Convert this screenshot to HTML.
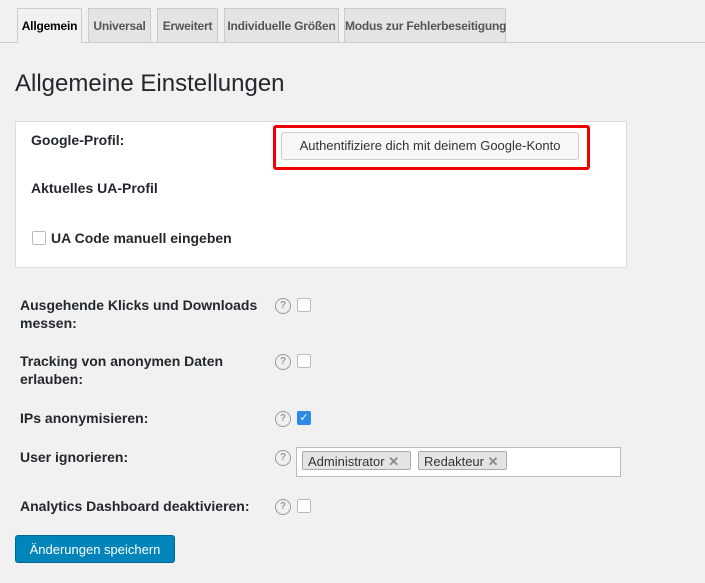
<!DOCTYPE html>
<html><head><meta charset="utf-8"><style>
body{margin:0;width:705px;height:583px;background:#f1f1f1;font-family:"Liberation Sans",sans-serif;color:#23282d;position:relative;overflow:hidden}
.a{position:absolute}
.tab{position:absolute;top:8px;height:34px;background:#e4e4e4;border:1px solid #ccc;border-bottom:none;font-size:12px;font-weight:bold;color:#555;line-height:34px;text-align:center;box-sizing:border-box;white-space:nowrap;letter-spacing:-0.2px}
.tab.on{background:#f1f1f1;color:#000;height:35px}
.lbl{position:absolute;font-size:14px;font-weight:bold;color:#23282d;line-height:18px;white-space:nowrap}
.q{position:absolute;width:14px;height:14px;border:1px solid #999;border-radius:50%;font-size:10px;color:#999;text-align:center;line-height:14px;font-weight:bold}
.cb{position:absolute;width:12px;height:12px;border:1px solid #bbb;background:#fff;border-radius:2px}
</style></head><body>
<div class="a" style="left:0;top:42px;width:705px;height:1px;background:#ccc"></div>
<div class="tab on" style="left:17px;width:65px">Allgemein</div>
<div class="tab" style="left:88px;width:63px">Universal</div>
<div class="tab" style="left:157px;width:61px">Erweitert</div>
<div class="tab" style="left:224px;width:115px">Individuelle Größen</div>
<div class="tab" style="left:344px;width:162px">Modus zur Fehlerbeseitigung</div>
<div class="a" style="left:15px;top:70px;font-size:24px;color:#23282d">Allgemeine Einstellungen</div>
<div class="a" style="left:15px;top:121px;width:610px;height:145px;background:#fff;border:1px solid #ddd"></div>
<div class="lbl" style="left:31px;top:131px">Google-Profil:</div>
<div class="a" style="left:273px;top:125px;width:311px;height:39px;border:3px solid #e00;border-radius:3px"></div>
<div class="a" style="left:281px;top:132px;width:296px;height:26px;background:#f7f7f7;border:1px solid #ccc;border-radius:3px;font-size:13px;line-height:26px;text-align:center;color:#333">Authentifiziere dich mit deinem Google-Konto</div>
<div class="lbl" style="left:31px;top:179px">Aktuelles UA-Profil</div>
<div class="cb" style="left:32px;top:231px"></div>
<div class="lbl" style="left:51px;top:229px">UA Code manuell eingeben</div>
<div class="lbl" style="left:20px;top:296px">Ausgehende Klicks und Downloads<br>messen:</div>
<div class="q" style="left:275px;top:298px">?</div><div class="cb" style="left:297px;top:298px"></div>
<div class="lbl" style="left:20px;top:352px">Tracking von anonymen Daten<br>erlauben:</div>
<div class="q" style="left:275px;top:354px">?</div><div class="cb" style="left:297px;top:354px"></div>
<div class="lbl" style="left:20px;top:409px">IPs anonymisieren:</div>
<div class="q" style="left:275px;top:411px">?</div>
<div class="a" style="left:297px;top:411px;width:14px;height:14px;background:#2d8ae6;border-radius:2px;color:#fff;font-size:11px;text-align:center;line-height:14px">✓</div>
<div class="lbl" style="left:20px;top:448px">User ignorieren:</div>
<div class="q" style="left:275px;top:450px">?</div>
<div class="a" style="left:296px;top:447px;width:323px;height:28px;background:#fff;border:1px solid #bbb"></div>
<div class="a" style="left:302px;top:451px;width:109px;height:19px;background:#e4e4e4;border:1px solid #aaa;border-radius:2px;font-size:13px;line-height:19px;padding-left:5px;box-sizing:border-box;color:#333;white-space:nowrap">Administrator <span style="color:#888;font-weight:bold">✕</span></div>
<div class="a" style="left:418px;top:451px;width:89px;height:19px;background:#e4e4e4;border:1px solid #aaa;border-radius:2px;font-size:13px;line-height:19px;padding-left:5px;box-sizing:border-box;color:#333;white-space:nowrap">Redakteur <span style="color:#888;font-weight:bold">✕</span></div>
<div class="lbl" style="left:20px;top:497px">Analytics Dashboard deaktivieren:</div>
<div class="q" style="left:275px;top:499px">?</div><div class="cb" style="left:297px;top:499px"></div>
<div class="a" style="left:15px;top:535px;width:160px;height:28px;background:#0085ba;border:1px solid #006799;border-radius:3px;color:#fff;font-size:13px;line-height:28px;text-align:center;box-sizing:border-box">Änderungen speichern</div>
</body></html>
